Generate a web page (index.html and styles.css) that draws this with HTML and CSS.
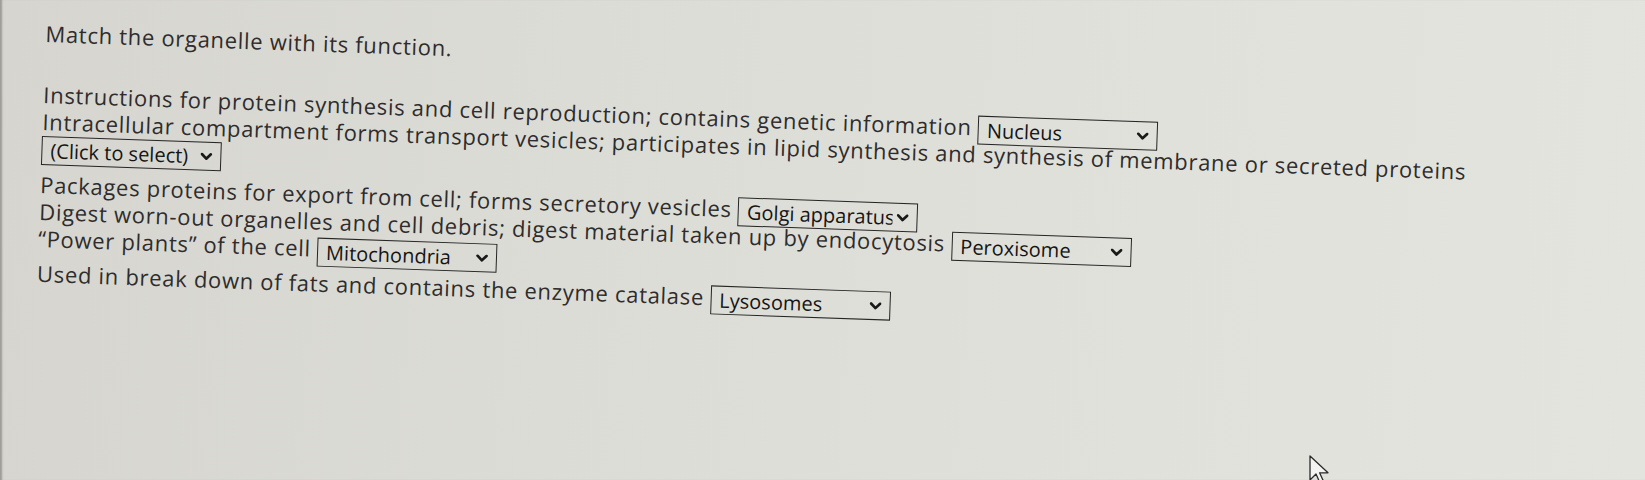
FILE: index.html
```html
<!DOCTYPE html>
<html lang="en">
<head>
    <meta charset="UTF-8">
    <meta name="viewport" content="width=device-width, initial-scale=1.0">
    <title>Match the organelle with its function</title>
    <link rel="stylesheet" href="styles.css">
</head>
<body>
    <div class="quiz">
        <p class="prompt">Match the organelle with its function.</p>
        <div class="items">
            <div class="item">
                Instructions for protein synthesis and cell reproduction; contains genetic information
                <span class="pick">
                    <select>
                        <option>(Click to select)</option>
                        <option selected>Nucleus</option>
                        <option>Endoplasmic reticulum</option>
                        <option>Golgi apparatus</option>
                        <option>Lysosomes</option>
                        <option>Peroxisome</option>
                        <option>Mitochondria</option>
                    </select>
                    <svg class="chev" width="12" height="8" viewBox="0 0 12 8"><path d="M1.5 1.5 6 6l4.5-4.5"/></svg>
                </span>
            </div>
            <div class="item spaced">
                Intracellular compartment forms transport vesicles; participates in lipid synthesis and synthesis of membrane or secreted proteins
                <span class="pick">
                    <select>
                        <option selected>(Click to select)</option>
                        <option>Nucleus</option>
                        <option>Endoplasmic reticulum</option>
                        <option>Golgi apparatus</option>
                        <option>Lysosomes</option>
                        <option>Peroxisome</option>
                        <option>Mitochondria</option>
                    </select>
                    <svg class="chev" width="12" height="8" viewBox="0 0 12 8"><path d="M1.5 1.5 6 6l4.5-4.5"/></svg>
                </span>
            </div>
            <div class="item">
                Packages proteins for export from cell; forms secretory vesicles
                <span class="pick">
                    <select>
                        <option>(Click to select)</option>
                        <option>Nucleus</option>
                        <option>Endoplasmic reticulum</option>
                        <option selected>Golgi apparatus</option>
                        <option>Lysosomes</option>
                        <option>Peroxisome</option>
                        <option>Mitochondria</option>
                    </select>
                    <svg class="chev" width="12" height="8" viewBox="0 0 12 8"><path d="M1.5 1.5 6 6l4.5-4.5"/></svg>
                </span>
            </div>
            <div class="item">
                Digest worn-out organelles and cell debris; digest material taken up by endocytosis
                <span class="pick">
                    <select>
                        <option>(Click to select)</option>
                        <option>Nucleus</option>
                        <option>Endoplasmic reticulum</option>
                        <option>Golgi apparatus</option>
                        <option>Lysosomes</option>
                        <option selected>Peroxisome</option>
                        <option>Mitochondria</option>
                    </select>
                    <svg class="chev" width="12" height="8" viewBox="0 0 12 8"><path d="M1.5 1.5 6 6l4.5-4.5"/></svg>
                </span>
            </div>
            <div class="item spaced-sm">
                &ldquo;Power plants&rdquo; of the cell
                <span class="pick">
                    <select>
                        <option>(Click to select)</option>
                        <option>Nucleus</option>
                        <option>Endoplasmic reticulum</option>
                        <option>Golgi apparatus</option>
                        <option>Lysosomes</option>
                        <option>Peroxisome</option>
                        <option selected>Mitochondria</option>
                    </select>
                    <svg class="chev" width="12" height="8" viewBox="0 0 12 8"><path d="M1.5 1.5 6 6l4.5-4.5"/></svg>
                </span>
            </div>
            <div class="item">
                Used in break down of fats and contains the enzyme catalase
                <span class="pick">
                    <select>
                        <option>(Click to select)</option>
                        <option>Nucleus</option>
                        <option>Endoplasmic reticulum</option>
                        <option>Golgi apparatus</option>
                        <option selected>Lysosomes</option>
                        <option>Peroxisome</option>
                        <option>Mitochondria</option>
                    </select>
                    <svg class="chev" width="12" height="8" viewBox="0 0 12 8"><path d="M1.5 1.5 6 6l4.5-4.5"/></svg>
                </span>
            </div>
        </div>
    </div>

    <svg class="cursor" width="22" height="32" viewBox="0 0 22 32">
        <path d="M1 1v24l6-6 4.5 10 3.5-1.6-4.4-9.6H19z"/>
    </svg>
</body>
</html>
```

FILE: styles.css
```css
* {
    margin: 0;
    padding: 0;
    box-sizing: border-box;
}

html, body {
    height: 100%;
    overflow: hidden;
}

body {
    font-family: "Open Sans", "Liberation Sans", Arial, sans-serif;
    font-size: 22px;
    letter-spacing: 0.7px;
    color: #2e2c2c;
    background: linear-gradient(95deg, #d6d5cf 0%, #dcdcd6 35%, #e1e1dc 70%, #e4e4df 100%);
    box-shadow: inset 3px 0 2px -1px #9c9b96;
    position: relative;
}

.quiz {
    width: 1460px;
    margin-left: 46px;
    padding-top: 20px;
    transform: rotate(2deg);
    transform-origin: 0 20px;
}

.prompt {
    line-height: 26px;
    margin-bottom: 35px;
}

.item {
    line-height: 26px;
}

.item.spaced {
    margin-bottom: 10px;
}

.item.spaced-sm {
    margin-bottom: 7px;
}

.pick {
    position: relative;
    display: inline-block;
    vertical-align: middle;
    margin: -3px 0 -4px;
    letter-spacing: 0;
}

.pick select {
    appearance: none;
    -webkit-appearance: none;
    display: block;
    width: 180px;
    height: 29px;
    padding: 0 24px 0 8px;
    border: 1.5px solid #262525;
    border-radius: 0;
    background: transparent;
    font-family: "Open Sans", "Liberation Sans", Arial, sans-serif;
    font-size: 20px;
    color: #151414;
}

.pick .chev {
    position: absolute;
    right: 9px;
    top: 11px;
    pointer-events: none;
}

.chev path {
    fill: none;
    stroke: #1a1919;
    stroke-width: 2.7;
    stroke-linecap: round;
    stroke-linejoin: round;
}

.cursor {
    position: absolute;
    left: 1309px;
    top: 455px;
}

.cursor path {
    fill: #f4f4f2;
    stroke: #2a2a2a;
    stroke-width: 1.3;
    stroke-linejoin: round;
}
```
